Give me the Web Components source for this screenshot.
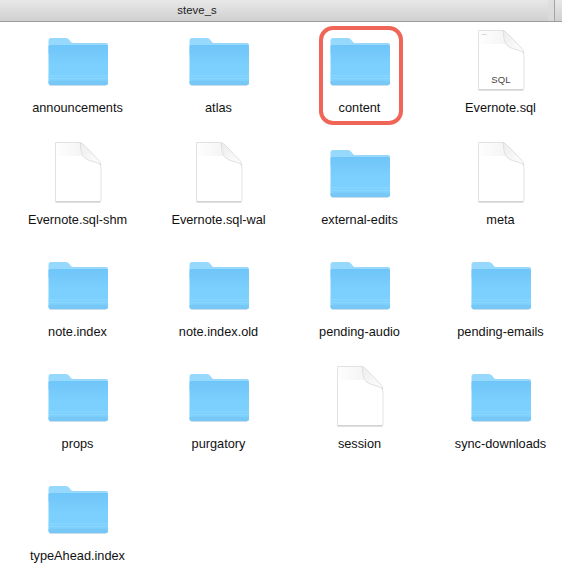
<!DOCTYPE html>
<html><head><meta charset="utf-8"><style>
html,body{margin:0;padding:0;background:#fff}
body{width:562px;height:573px;overflow:hidden;font-family:"Liberation Sans",Arial,sans-serif}
</style></head><body>
<finder-window>
<finder-bar slot="bar">steve_s</finder-bar>
<finder-item name="announcements" kind="folder"></finder-item>
<finder-item name="atlas" kind="folder"></finder-item>
<finder-item name="content" kind="folder" selected></finder-item>
<finder-item name="Evernote.sql" kind="doc" ext="SQL"></finder-item>
<finder-item name="Evernote.sql-shm" kind="doc"></finder-item>
<finder-item name="Evernote.sql-wal" kind="doc"></finder-item>
<finder-item name="external-edits" kind="folder"></finder-item>
<finder-item name="meta" kind="doc"></finder-item>
<finder-item name="note.index" kind="folder"></finder-item>
<finder-item name="note.index.old" kind="folder"></finder-item>
<finder-item name="pending-audio" kind="folder"></finder-item>
<finder-item name="pending-emails" kind="folder"></finder-item>
<finder-item name="props" kind="folder"></finder-item>
<finder-item name="purgatory" kind="folder"></finder-item>
<finder-item name="session" kind="doc"></finder-item>
<finder-item name="sync-downloads" kind="folder"></finder-item>
<finder-item name="typeAhead.index" kind="folder"></finder-item>
</finder-window>
<script>
class FinderWindow extends HTMLElement{constructor(){super();this.attachShadow({mode:'open'}).innerHTML=`<style>
:host{display:block;width:562px;height:573px;overflow:hidden}
.grid{display:grid;grid-template-columns:repeat(4,141px);grid-auto-rows:112px;padding:0 0 0 7.5px}
</style><slot name="bar"></slot><div class="grid"><slot></slot></div>`}}
class FinderBar extends HTMLElement{constructor(){super();this.attachShadow({mode:'open'}).innerHTML=`<style>
:host{display:flex;height:21px;border-bottom:1px solid #9c9c9c;background:linear-gradient(#e8e8e8,#d0d0d0);font:11.3px "Liberation Sans",Arial,sans-serif;color:#222}
.t{width:394px;text-align:center;line-height:20px;letter-spacing:.1px}
.sp{flex:1}
.s{width:6px;background:linear-gradient(#e0e0e0,#d8d8d8)}
.d{width:1px;background:#a4a4a4}
.r{width:7px}
</style><div class="t"><slot></slot></div><div class="sp"></div><div class="s"></div><div class="d"></div><div class="r"></div>`}}
const FOLDER=`<svg width="64" height="52" viewBox="0 0 64 52" aria-hidden="true">
<defs>
<linearGradient id="b" x1="0" y1="0" x2="0" y2="1"><stop offset="0" stop-color="#6fc5f8"/><stop offset=".5" stop-color="#7bd0fe"/><stop offset="1" stop-color="#7bd0fe"/></linearGradient>
</defs>
<path d="M2.500 6.500Q2.500 4 5 4H20Q22 4 23 5.500L24.500 7.500Q25.500 9 27.500 9H60Q62 9 62 11V20H2.500Z" fill="#97d9fd"/>
<path d="M2.500 12.500Q2.500 11 4 11H60.500Q62 11 62 12.500V49Q62 51 60 51H4.500Q2.500 51 2.500 49Z" fill="url(#b)"/>
<rect x="2.500" y="41.500" width="59.500" height="1" fill="#8bd7fd"/>
<rect x="2.500" y="44" width="59.500" height="1" fill="#8bd7fd"/>
<path d="M2.500 47H62V49Q62 51 60 51H4.500Q2.500 51 2.500 49Z" fill="#77c8f7"/>
<path d="M4 51.400H60" stroke="#6d9fc2" stroke-width=".8" opacity=".5"/>
</svg>`;
const DOC=(ext)=>`<svg width="64" height="64" viewBox="0 0 64 64" aria-hidden="true">
<defs><linearGradient id="s" x1="0" y1="0" x2="1" y2="0"><stop offset="0" stop-color="#fdfdfd"/><stop offset="1" stop-color="#f0f0f0"/></linearGradient>
<linearGradient id="f" x1="0" y1="0" x2="1" y2="1"><stop offset="0" stop-color="#ececec"/><stop offset="1" stop-color="#fff"/></linearGradient></defs>
<path d="M9.500 2.500H34L51 19.500Q55 23.500 55 28V60Q55 61.500 53.500 61.500H9.500Z" fill="#fff" stroke="#e2e2e2"/>
<path d="M10 3H33.500Q34 12 36 16L10 16Z" fill="url(#s)" opacity=".7"/>
<path d="M9.500 62H54.500" stroke="#c2c2c2"/>
<path d="M34 2.500Q34.500 12 36.500 15.500Q39.500 20 47 21.500Q52 22.500 55 25Q54 21 51 18.500L38.500 5.500Q36 3 34 2.500Z" fill="url(#f)" stroke="#d4d4d4" stroke-width=".7"/>
${ext?`<path d="M12.500 6.500H17.500" stroke="#d8d8d8"/>`:''}
</svg>${ext?`<span class="ext">${ext}</span>`:''}`;
class FinderItem extends HTMLElement{constructor(){super();this.attachShadow({mode:'open'})}
connectedCallback(){const k=this.getAttribute('kind'),n=this.getAttribute('name'),e=this.getAttribute('ext'),sel=this.hasAttribute('selected');
this.shadowRoot.innerHTML=`<style>
:host{display:block;position:relative;height:112px;font:12.750px "Liberation Sans",Arial,sans-serif;color:#111}
.ic{position:relative;height:70px;display:flex;justify-content:center;align-items:flex-end}
.folder{padding-bottom:6px;box-sizing:border-box}
svg{display:block;filter:blur(.35px)}
.ext{position:absolute;left:0;right:0;bottom:7px;text-align:center;font-size:9.500px;color:#444;letter-spacing:.1px}
.n{display:block;text-align:center;line-height:16px;margin:8px 1px 0 0;white-space:nowrap}
.sel{position:absolute;left:29px;top:4px;width:84.500px;height:99px;box-sizing:border-box;border:4.500px solid #ef6557;border-radius:14px}
</style><div class="ic ${k}">${k==='folder'?FOLDER:DOC(e)}</div><span class="n">${n}</span>${sel?'<div class="sel"></div>':''}`}}
customElements.define('finder-window',FinderWindow);customElements.define('finder-bar',FinderBar);customElements.define('finder-item',FinderItem);
</script>
</body></html>
